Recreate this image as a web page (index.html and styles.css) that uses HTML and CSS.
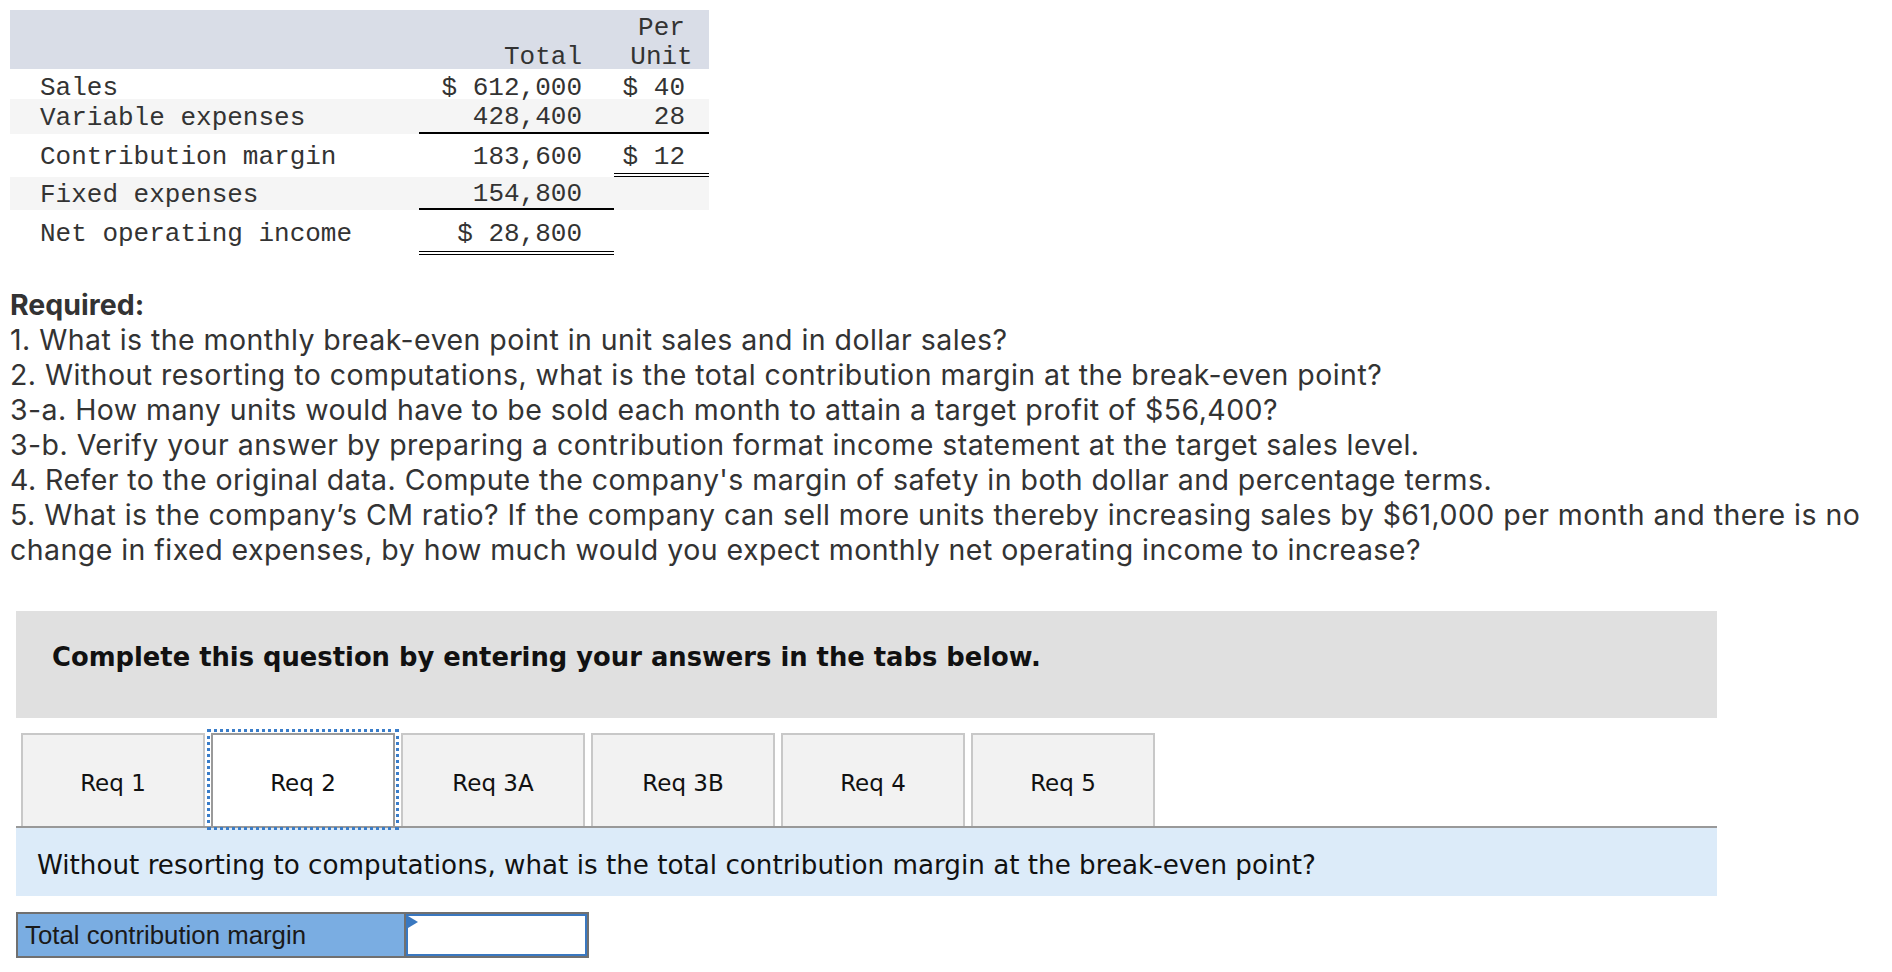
FILE: index.html
```html
<!DOCTYPE html>
<html lang="en">
<head>
<meta charset="utf-8">
<title>Break-even question</title>
<link rel="stylesheet" href="styles.css">
</head>
<body>
<div class="page">
  <table class="stmt">
    <colgroup>
      <col class="c-label">
      <col class="c-total">
      <col class="c-unit">
    </colgroup>
    <thead>
      <tr class="hdr">
        <th></th>
        <th class="num"><span class="hdr-text">Total</span></th>
        <th class="unit-h"><span class="hdr-text">Per<br>Unit</span></th>
      </tr>
    </thead>
    <tbody>
      <tr class="r-sales">
        <td class="lbl">Sales</td>
        <td class="num">$ 612,000</td>
        <td class="num">$ 40</td>
      </tr>
      <tr class="r-var alt">
        <td class="lbl">Variable expenses</td>
        <td class="num line">428,400</td>
        <td class="num line">28</td>
      </tr>
      <tr class="r-cm">
        <td class="lbl">Contribution margin</td>
        <td class="num">183,600</td>
        <td class="num dbl">$ 12</td>
      </tr>
      <tr class="r-fixed alt">
        <td class="lbl">Fixed expenses</td>
        <td class="num line">154,800</td>
        <td class="num"></td>
      </tr>
      <tr class="r-net">
        <td class="lbl">Net operating income</td>
        <td class="num dbl">$ 28,800</td>
        <td class="num"></td>
      </tr>
    </tbody>
  </table>

  <div class="required">
    <div class="req-title">Required:</div>
    <div class="req-line">1. What is the monthly break-even point in unit sales and in dollar sales?</div>
    <div class="req-line">2. Without resorting to computations, what is the total contribution margin at the break-even point?</div>
    <div class="req-line">3-a. How many units would have to be sold each month to attain a target profit of $56,400?</div>
    <div class="req-line">3-b. Verify your answer by preparing a contribution format income statement at the target sales level.</div>
    <div class="req-line">4. Refer to the original data. Compute the company's margin of safety in both dollar and percentage terms.</div>
    <div class="req-line">5. What is the company’s CM ratio? If the company can sell more units thereby increasing sales by $61,000 per month and there is no<br>change in fixed expenses, by how much would you expect monthly net operating income to increase?</div>
  </div>

  <div class="instructions">Complete this question by entering your answers in the tabs below.</div>

  <div class="tabs">
    <div class="tab">Req 1</div>
    <div class="tab active">Req 2</div>
    <div class="tab">Req 3A</div>
    <div class="tab">Req 3B</div>
    <div class="tab">Req 4</div>
    <div class="tab">Req 5</div>
  </div>

  <div class="question">Without resorting to computations, what is the total contribution margin at the break-even point?</div>

  <div class="answer">
    <div class="answer-label">Total contribution margin</div>
    <div class="answer-input"><span class="flag"></span></div>
  </div>
</div>
</body>
</html>
```

FILE: styles.css
```css
html, body {
  margin: 0;
  padding: 0;
  background: #ffffff;
}

.page {
  padding: 10px 0 0 0;
}

/* ---------- statement table ---------- */
.stmt {
  margin-left: 10px;
  border-collapse: separate;
  border-spacing: 0;
  width: 699px;
  font-family: "Liberation Mono", "Courier New", monospace;
  font-size: 26px;
  line-height: 20px;
  color: #333333;
}
.c-label { width: 409px; }
.c-total { width: 195px; }
.c-unit { width: 95px; }

.stmt th,
.stmt td {
  padding: 0;
  font-weight: normal;
  white-space: nowrap;
}

.hdr th {
  background: #d9dde7;
  height: 59px;
  vertical-align: bottom;
  line-height: 29px;
}
.hdr-text {
  display: block;
  margin-bottom: -3px;
}
.hdr th.num {
  text-align: right;
  padding-right: 32px;
}
.hdr th.unit-h {
  text-align: center;
  padding-right: 0;
}

.stmt td.lbl {
  padding-left: 30px;
  text-align: left;
}
.stmt td.num {
  text-align: right;
}
.stmt td:nth-child(2) { padding-right: 32px; }
.stmt td:nth-child(3) { padding-right: 24px; }

.alt td { background: #f5f5f5; }

.r-sales td { padding-top: 9px; padding-bottom: 1px; }
.r-var td { padding-top: 8px; padding-bottom: 5px; }
.r-cm td { padding-top: 13px; padding-bottom: 10px; }
.r-cm td.dbl { padding-bottom: 6px; }
.r-fixed td { padding-top: 7px; padding-bottom: 4px; }
.r-net td { padding-top: 14px; padding-bottom: 11px; }
.r-net td.dbl { padding-bottom: 7px; }

.stmt td.line { border-bottom: 2px solid #000000; }
.stmt td.dbl { border-bottom: 4px double #000000; }

/* ---------- required text ---------- */
.required {
  margin-top: 32px;
  padding-left: 10px;
  font-family: "Inter", "Open Sans", sans-serif;
  font-size: 28.5px;
  letter-spacing: 0.45px;
  line-height: 35px;
  color: #333333;
}
.req-title {
  font-weight: 700;
  letter-spacing: 0;
}
.req-line {
  white-space: nowrap;
}

/* ---------- instruction box ---------- */
.instructions {
  margin: 44px 175px 0 16px;
  background: #e0e0e0;
  padding: 31px 0 46px 36px;
  font-family: "DejaVu Sans", Verdana, sans-serif;
  font-weight: bold;
  font-size: 25.8px;
  line-height: 30px;
  color: #111111;
}

/* ---------- tabs ---------- */
.tabs {
  display: flex;
  gap: 6px;
  margin: 15px 0 0 21px;
}
.tab {
  box-sizing: border-box;
  width: 184px;
  height: 93px;
  padding-top: 4px;
  background: #f2f2f2;
  border: 2px solid #c8c8c8;
  border-bottom: none;
  display: flex;
  align-items: center;
  justify-content: center;
  font-family: "DejaVu Sans", Verdana, sans-serif;
  font-size: 23px;
  color: #111111;
}
.tab.active {
  background: #ffffff;
  border-color: #9a9a9a;
  outline: 3px dotted #3a7dc9;
  outline-offset: 1px;
  position: relative;
  z-index: 1;
}

/* ---------- question panel ---------- */
.question {
  margin: 0 175px 0 16px;
  border-top: 2px solid #999999;
  background: #dcebf9;
  height: 70px;
  box-sizing: border-box;
  padding: 5px 0 0 21px;
  display: flex;
  align-items: center;
  font-family: "DejaVu Sans", Verdana, sans-serif;
  font-size: 26.2px;
  color: #111111;
}

/* ---------- answer row ---------- */
.answer {
  margin: 16px 0 0 16px;
  display: flex;
  width: 573px;
  height: 46px;
  box-sizing: border-box;
  border: 2px solid #707070;
}
.answer-label {
  width: 388px;
  background: #7aade2;
  border-right: 2px solid #707070;
  display: flex;
  align-items: center;
  padding-left: 7px;
  box-sizing: border-box;
  font-family: "Liberation Sans", Arial, sans-serif;
  font-size: 25.8px;
  color: #1a1a1a;
}
.answer-input {
  flex: 1;
  background: #ffffff;
  border: 2px solid #3a78c0;
  position: relative;
}
.flag {
  position: absolute;
  left: 0;
  top: 0;
  width: 0;
  height: 0;
  border-top: 6px solid transparent;
  border-bottom: 6px solid transparent;
  border-left: 10px solid #3a78c0;
}
```
